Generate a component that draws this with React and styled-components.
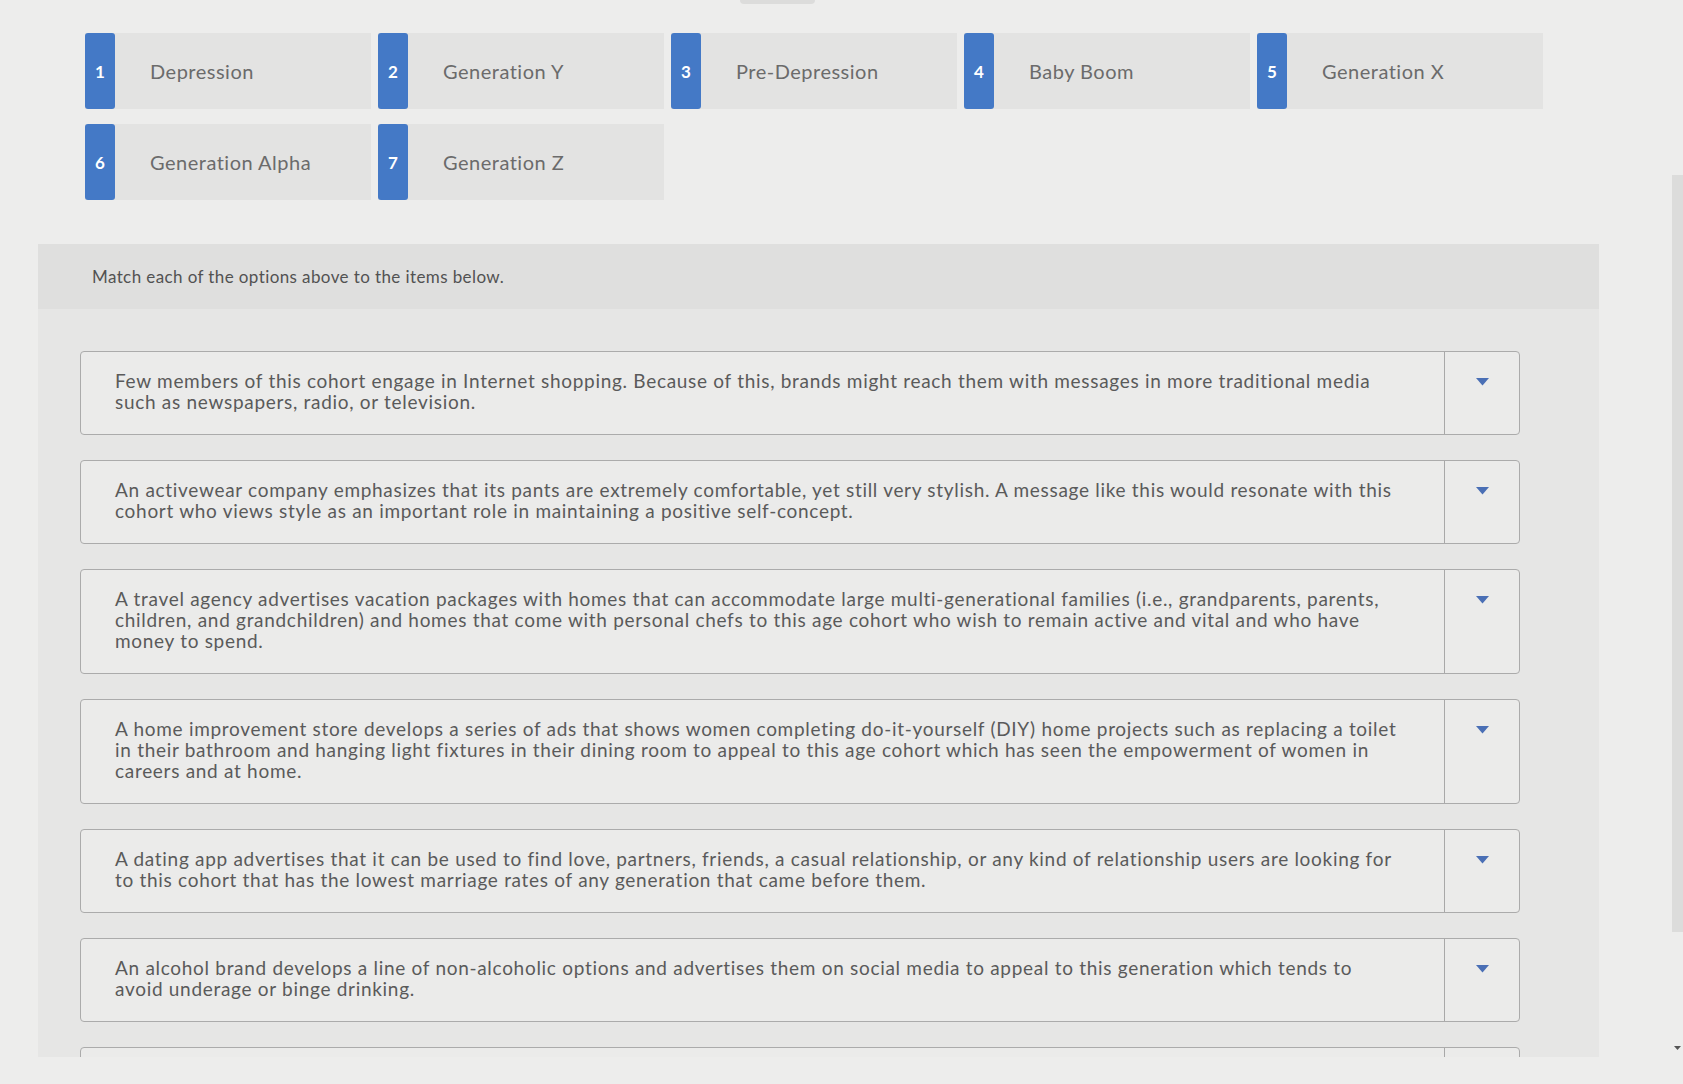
import React from 'react';
import styled, { createGlobalStyle } from 'styled-components';

const GlobalStyle = createGlobalStyle`
  html, body {
    margin: 0;
    padding: 0;
    background: #ededec;
    font-family: Lato, "Liberation Sans", sans-serif;
  }
`;

const Page = styled.div`
  display: flex;
  width: 1683px;
  height: 1084px;
  overflow: hidden;
  background: #ededec;
`;

const Main = styled.div`
  flex: 1;
  display: flex;
  flex-direction: column;
`;

const TopEdge = styled.div`
  width: 75px;
  height: 4px;
  margin-left: 740px;
  background: #dcdcdb;
  border-radius: 0 0 6px 6px;
`;

const Options = styled.div`
  display: grid;
  grid-template-columns: repeat(5, 286px);
  column-gap: 7px;
  row-gap: 15px;
  margin: 29px 0 0 85px;
`;

const Tile = styled.div`
  display: flex;
  align-items: center;
  height: 76px;
  background: #e3e3e2;
`;

const Badge = styled.div`
  width: 30px;
  height: 100%;
  border-radius: 3px;
  background: #4479c6;
  color: #fff;
  font-weight: 700;
  font-size: 17px;
  display: flex;
  align-items: center;
  justify-content: center;
`;

const TileLabel = styled.span`
  margin-left: 35px;
  font-size: 20px;
  letter-spacing: 0.5px;
  color: #6b6b6b;
`;

const Panel = styled.section`
  margin: 44px 0 0 38px;
  width: 1561px;
  height: 813px;
  overflow: hidden;
  background: #e6e6e5;
`;

const PanelHead = styled.div`
  height: 65px;
  display: flex;
  align-items: center;
  padding-left: 54px;
  background: #dfdfde;
  font-size: 17px;
  letter-spacing: 0.4px;
  color: #525252;
`;

const ItemList = styled.div`
  display: flex;
  flex-direction: column;
  gap: 25px;
  padding: 42px 0 0 42px;
`;

const Item = styled.div`
  display: flex;
  width: 1440px;
  min-height: ${(p) => (p.$empty ? 84 : 0)}px;
  border: 1px solid #ababab;
  border-radius: 4px;
  background: #ebebea;
  box-sizing: border-box;
`;

const ItemText = styled.div`
  flex: 1;
  padding: 18px 20px 22px 34px;
  font-size: 19px;
  letter-spacing: 0.7px;
  line-height: 21px;
  color: #5a5a5a;
`;

const Line = styled.span`
  display: block;
  white-space: nowrap;
`;

const Picker = styled.div`
  width: 75px;
  border-left: 1px solid #a8a8a8;
  display: flex;
  justify-content: center;
  padding-top: 26px;
  box-sizing: border-box;
`;

const ScrollRail = styled.div`
  width: 11px;
  display: flex;
  flex-direction: column;
  padding-top: 175px;
`;

const Thumb = styled.div`
  height: 757px;
  background: #dcdcdb;
`;

const RailEnd = styled.div`
  margin-top: auto;
  margin-bottom: 34px;
  display: flex;
  justify-content: center;
`;

const options = [
  'Depression',
  'Generation Y',
  'Pre-Depression',
  'Baby Boom',
  'Generation X',
  'Generation Alpha',
  'Generation Z',
];

const items = [
  [
    'Few members of this cohort engage in Internet shopping. Because of this, brands might reach them with messages in more traditional media',
    'such as newspapers, radio, or television.',
  ],
  [
    'An activewear company emphasizes that its pants are extremely comfortable, yet still very stylish. A message like this would resonate with this',
    'cohort who views style as an important role in maintaining a positive self-concept.',
  ],
  [
    'A travel agency advertises vacation packages with homes that can accommodate large multi-generational families (i.e., grandparents, parents,',
    'children, and grandchildren) and homes that come with personal chefs to this age cohort who wish to remain active and vital and who have',
    'money to spend.',
  ],
  [
    'A home improvement store develops a series of ads that shows women completing do-it-yourself (DIY) home projects such as replacing a toilet',
    'in their bathroom and hanging light fixtures in their dining room to appeal to this age cohort which has seen the empowerment of women in',
    'careers and at home.',
  ],
  [
    'A dating app advertises that it can be used to find love, partners, friends, a casual relationship, or any kind of relationship users are looking for',
    'to this cohort that has the lowest marriage rates of any generation that came before them.',
  ],
  [
    'An alcohol brand develops a line of non-alcoholic options and advertises them on social media to appeal to this generation which tends to',
    'avoid underage or binge drinking.',
  ],
  [],
];

function Caret() {
  return (
    <svg width="13" height="8" viewBox="0 0 13 8">
      <path d="M0 0 H13 L6.5 7.5 Z" fill="#4a6fb5" />
    </svg>
  );
}

function App() {
  return (
    <Page>
      <GlobalStyle />
      <Main>
        <TopEdge />
        <Options>
          {options.map((label, i) => (
            <Tile key={label}>
              <Badge>{i + 1}</Badge>
              <TileLabel>{label}</TileLabel>
            </Tile>
          ))}
        </Options>
        <Panel>
          <PanelHead>Match each of the options above to the items below.</PanelHead>
          <ItemList>
            {items.map((lines, i) => (
              <Item key={i} $empty={lines.length === 0}>
                <ItemText>
                  {lines.map((l) => <Line key={l}>{l}</Line>)}
                </ItemText>
                <Picker>
                  <Caret />
                </Picker>
              </Item>
            ))}
          </ItemList>
        </Panel>
      </Main>
      <ScrollRail>
        <Thumb />
        <RailEnd>
          <svg width="7" height="4" viewBox="0 0 7 4">
            <path d="M0 0 H7 L3.5 4 Z" fill="#555" />
          </svg>
        </RailEnd>
      </ScrollRail>
    </Page>
  );
}

export default App;
